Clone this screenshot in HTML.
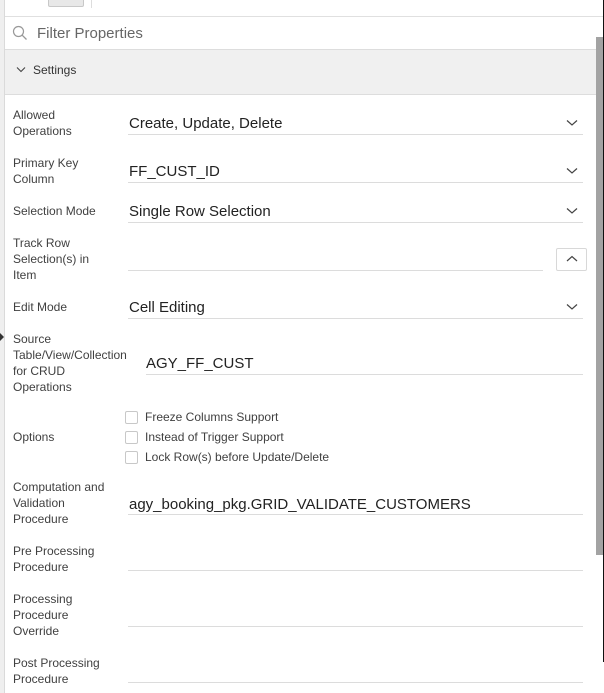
<!DOCTYPE html>
<html><head><style>
*{margin:0;padding:0;box-sizing:border-box}
body{width:604px;height:693px;overflow:hidden;background:#fff;font-family:"Liberation Sans",Arial,sans-serif;position:relative;color:#333}
.a{position:absolute}
.lbl{position:absolute;left:13px;font-size:12px;line-height:16px;color:#404040}
.val{position:absolute;left:129px;font-size:15px;color:#222;line-height:18px}
.ul{position:absolute;height:1px;background:#dcdcdc}
.chev{position:absolute;left:566px;width:12px;height:8px}
.cb{position:absolute;left:125px;width:13px;height:13px;border:1px solid #c8c8c8;border-radius:2px;background:#fff}
.cbt{position:absolute;left:145px;font-size:12px;color:#404040;line-height:14px}
</style></head><body>
<div class="a" style="left:0;top:0;width:5px;height:693px;background:#efefef;border-right:1px solid #dadada"></div>
<div class="a" style="left:0;top:333px;width:0;height:0;border-top:4px solid transparent;border-bottom:4px solid transparent;border-left:4px solid #333"></div>
<div class="a" style="left:48px;top:-1px;width:36px;height:8px;background:#e8e8e8;border:1px solid #c8c8c8;border-radius:0 0 2px 2px"></div>
<div class="a" style="left:91px;top:0;width:1px;height:8px;background:#ddd"></div>
<div class="a" style="left:5px;top:16px;width:598px;height:1px;background:#e0e0e0"></div>
<svg class="a" style="left:12px;top:25px" width="16" height="16" viewBox="0 0 16 16"><circle cx="6.5" cy="6.5" r="5" fill="none" stroke="#999" stroke-width="1.2"/><path d="M10.2 10.2L14.5 14.5" stroke="#999" stroke-width="1.3"/></svg>
<div class="a" style="left:37px;top:25px;font-size:15px;color:#666">Filter Properties</div>
<div class="a" style="left:5px;top:49px;width:591px;height:46px;background:#f0f0f0;border-top:1px solid #ddd;border-bottom:1px solid #ddd"></div>
<svg class="a" style="left:16px;top:66px" width="10" height="7" viewBox="0 0 10 7"><path d="M1 1.5L5 5.5L9 1.5" fill="none" stroke="#444" stroke-width="1.1"/></svg>
<div class="a" style="left:33px;top:63px;font-size:12px;color:#333">Settings</div>
<div class="a" style="left:596px;top:37px;width:7px;height:518px;background:#a3a3a3"></div>
<div class="a" style="left:603px;top:0;width:1px;height:662px;background:#111"></div>

<div class="lbl" style="top:107px">Allowed<br>Operations</div>
<div class="val" style="top:115px">Create, Update, Delete</div>
<div class="ul" style="left:128px;top:134px;width:455px"></div>
<svg class="chev" style="top:119px" viewBox="0 0 12 8"><path d="M1 1.5L6 6L11 1.5" fill="none" stroke="#444" stroke-width="1.2"/></svg>

<div class="lbl" style="top:155px">Primary Key<br>Column</div>
<div class="val" style="top:163px">FF_CUST_ID</div>
<div class="ul" style="left:128px;top:182px;width:455px"></div>
<svg class="chev" style="top:167px" viewBox="0 0 12 8"><path d="M1 1.5L6 6L11 1.5" fill="none" stroke="#444" stroke-width="1.2"/></svg>

<div class="lbl" style="top:203px">Selection Mode</div>
<div class="val" style="top:203px">Single Row Selection</div>
<div class="ul" style="left:128px;top:222px;width:455px"></div>
<svg class="chev" style="top:207px" viewBox="0 0 12 8"><path d="M1 1.5L6 6L11 1.5" fill="none" stroke="#444" stroke-width="1.2"/></svg>

<div class="lbl" style="top:235px">Track Row<br>Selection(s) in<br>Item</div>
<div class="ul" style="left:128px;top:270px;width:415px"></div>
<div class="a" style="left:556px;top:248px;width:31px;height:23px;border:1px solid #d8d8d8;border-radius:2px;background:#fff"></div>
<svg class="a" style="left:566px;top:255px" width="12" height="8" viewBox="0 0 12 8"><path d="M1 6L6 1.5L11 6" fill="none" stroke="#444" stroke-width="1.2"/></svg>

<div class="lbl" style="top:299px">Edit Mode</div>
<div class="val" style="top:299px">Cell Editing</div>
<div class="ul" style="left:128px;top:318px;width:455px"></div>
<svg class="chev" style="top:303px" viewBox="0 0 12 8"><path d="M1 1.5L6 6L11 1.5" fill="none" stroke="#444" stroke-width="1.2"/></svg>

<div class="lbl" style="top:331px">Source<br>Table/View/Collection<br>for CRUD<br>Operations</div>
<div class="val" style="left:146px;top:355px">AGY_FF_CUST</div>
<div class="ul" style="left:146px;top:374px;width:437px"></div>

<div class="cb" style="top:411px"></div><div class="cbt" style="top:410px">Freeze Columns Support</div>
<div class="lbl" style="top:429px">Options</div>
<div class="cb" style="top:431px"></div><div class="cbt" style="top:430px">Instead of Trigger Support</div>
<div class="cb" style="top:451px"></div><div class="cbt" style="top:450px">Lock Row(s) before Update/Delete</div>

<div class="lbl" style="top:479px">Computation and<br>Validation<br>Procedure</div>
<div class="val" style="top:496px">agy_booking_pkg.GRID_VALIDATE_CUSTOMERS</div>
<div class="ul" style="left:128px;top:514px;width:455px"></div>

<div class="lbl" style="top:543px">Pre Processing<br>Procedure</div>
<div class="ul" style="left:128px;top:570px;width:455px"></div>

<div class="lbl" style="top:591px">Processing<br>Procedure<br>Override</div>
<div class="ul" style="left:128px;top:626px;width:455px"></div>

<div class="lbl" style="top:655px">Post Processing<br>Procedure</div>
<div class="ul" style="left:128px;top:682px;width:455px"></div>
</body></html>
